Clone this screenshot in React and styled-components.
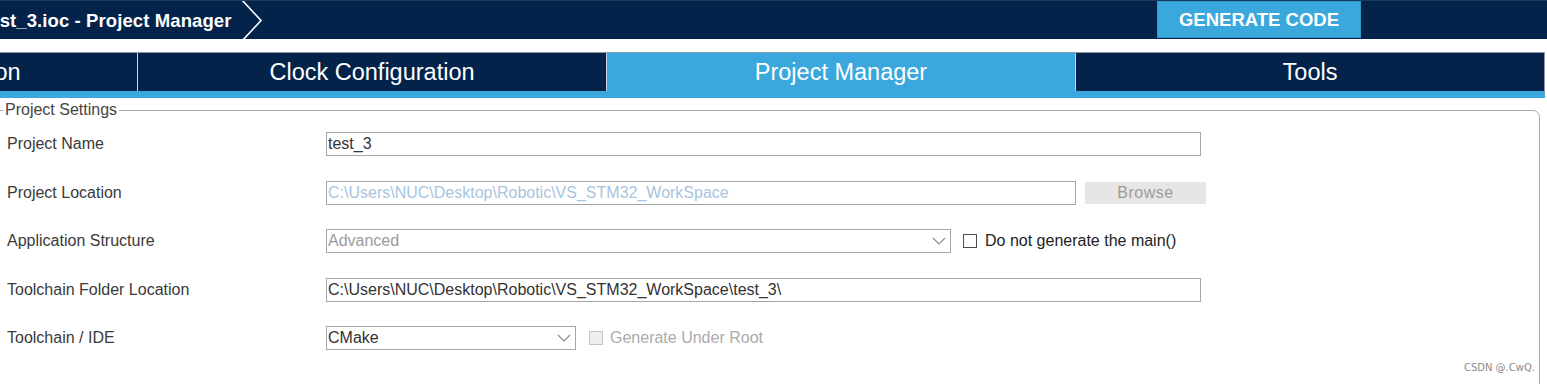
import React from "react";
import styled, { createGlobalStyle } from "styled-components";

const navy = "#03234b";
const blue = "#3aa8dc";

const GlobalStyle = createGlobalStyle`
  html, body {
    margin: 0;
    padding: 0;
    background: #ffffff;
    overflow: hidden;
  }
  body {
    font-family: "Liberation Sans", Arial, sans-serif;
  }
`;

const Page = styled.div`
  width: 1547px;
  height: 384px;
  overflow: hidden;
  position: relative;
`;

const TopBar = styled.div`
  display: flex;
  align-items: center;
  height: 39px;
  box-sizing: border-box;
  background: ${navy};
  border-top: 1px solid #1d3a60;
`;

const Title = styled.div`
  margin-left: -17px;
  color: #ffffff;
  font-weight: 700;
  font-size: 18.5px;
  letter-spacing: 0.1px;
  white-space: nowrap;
  padding-top: 1px;
`;

const Chevron = styled.svg`
  margin-left: 10px;
  flex: none;
`;

const GenerateButton = styled.div`
  margin-left: auto;
  margin-right: 186px;
  width: 204px;
  height: 37px;
  box-sizing: border-box;
  background: ${blue};
  border: 1px solid #3196c8;
  color: #ffffff;
  font-weight: 700;
  font-size: 18.5px;
  display: flex;
  align-items: center;
  justify-content: center;
  align-self: flex-start;
`;

const TabBar = styled.div`
  margin-top: 13px;
  margin-left: -331px;
  width: 1875px;
  border-top: 1px solid #8a98ac;
  border-right: 1px solid #8a98ac;
  border-bottom: 7px solid ${blue};
  display: flex;
`;

const Tab = styled.div`
  width: ${(p) => (p.$last ? 468 : 469)}px;
  height: 38px;
  flex: none;
  background: ${(p) => (p.$active ? blue : navy)};
  border-right: ${(p) => (p.$last ? "none" : "1px solid #c9d3de")};
  color: #ffffff;
  font-size: 23.5px;
  padding-top: 1px;
  box-sizing: border-box;
  display: flex;
  align-items: center;
  justify-content: center;
  white-space: nowrap;
`;

const Fieldset = styled.fieldset`
  margin: 3px 0 0 -6px;
  width: 1546px;
  height: 320px;
  box-sizing: border-box;
  border: 1px solid #a3a8ae;
  border-top-right-radius: 7px;
  padding: 13px 0 0 12px;
`;

const Legend = styled.legend`
  margin-left: -4px;
  padding: 0 2px;
  font-size: 16px;
  color: #444444;
  line-height: 18px;
`;

const Form = styled.div`
  display: flex;
  flex-direction: column;
  gap: 24.5px;
`;

const Row = styled.div`
  display: flex;
  align-items: center;
  height: 24px;
`;

const Label = styled.div`
  width: 319px;
  flex: none;
  font-size: 16px;
  color: #3a3a3a;
`;

const TextInput = styled.div`
  width: ${(p) => p.$width}px;
  height: 24px;
  box-sizing: border-box;
  border: 1px solid #a6a6a6;
  padding: 0 1px;
  font-size: 16px;
  line-height: 22px;
  color: ${(p) => (p.$disabled ? "#a9c4de" : "#333333")};
  white-space: nowrap;
  overflow: hidden;
`;

const BrowseButton = styled.div`
  margin-left: 9px;
  width: 121px;
  height: 22px;
  background: #e6e6e6;
  color: #9c9c9c;
  font-size: 16px;
  letter-spacing: 0.5px;
  display: flex;
  align-items: center;
  justify-content: center;
`;

const Select = styled.div`
  width: ${(p) => p.$width}px;
  height: 24px;
  box-sizing: border-box;
  border: 1px solid #a6a6a6;
  padding: 0 4px 0 1px;
  font-size: 16px;
  color: ${(p) => (p.$muted ? "#9b9b9b" : "#333333")};
  display: flex;
  align-items: center;
  justify-content: space-between;
`;

const CheckRow = styled.label`
  display: flex;
  align-items: center;
  margin-left: ${(p) => p.$offset}px;
  font-size: 16px;
  color: ${(p) => (p.$disabled ? "#ababab" : "#222222")};
`;

const Box = styled.span`
  width: 14px;
  height: 14px;
  box-sizing: border-box;
  border: 1px solid ${(p) => (p.$disabled ? "#c4c4c4" : "#4d4d4d")};
  background: ${(p) => (p.$disabled ? "#efefef" : "#ffffff")};
  margin-right: ${(p) => (p.$disabled ? 7 : 8)}px;
`;

const Watermark = styled.div`
  position: absolute;
  right: 12px;
  bottom: 11px;
  font-size: 10px;
  color: #8a8a8a;
  font-family: "DejaVu Sans", "Liberation Sans", sans-serif;
`;

const ArrowDown = () => (
  <svg width="14" height="8" viewBox="0 0 14 8">
    <path d="M1 1 L7 7 L13 1" fill="none" stroke="#8a8a8a" strokeWidth="1.1" />
  </svg>
);

const Check = ({ label, offset, disabled }) => (
  <CheckRow $offset={offset} $disabled={disabled}>
    <Box $disabled={disabled} />
    {label}
  </CheckRow>
);

export default function App() {
  return (
    <Page>
      <GlobalStyle />
      <TopBar>
        <Title>test_3.ioc - Project Manager</Title>
        <Chevron width="22" height="39" viewBox="0 0 22 39">
          <path d="M0 -1 L19 19.5 L0 40" fill="none" stroke="#ffffff" strokeWidth="1.6" />
        </Chevron>
        <GenerateButton>GENERATE CODE</GenerateButton>
      </TopBar>

      <TabBar>
        <Tab>Pinout &amp; Configuration</Tab>
        <Tab>Clock Configuration</Tab>
        <Tab $active>Project Manager</Tab>
        <Tab $last>Tools</Tab>
      </TabBar>

      <Fieldset>
        <Legend>Project Settings</Legend>
        <Form>
          <Row>
            <Label>Project Name</Label>
            <TextInput $width={875}>test_3</TextInput>
          </Row>
          <Row>
            <Label>Project Location</Label>
            <TextInput $width={750} $disabled>
              C:\Users\NUC\Desktop\Robotic\VS_STM32_WorkSpace
            </TextInput>
            <BrowseButton>Browse</BrowseButton>
          </Row>
          <Row>
            <Label>Application Structure</Label>
            <Select $width={625} $muted>
              Advanced
              <ArrowDown />
            </Select>
            <Check label="Do not generate the main()" offset={12} />
          </Row>
          <Row>
            <Label>Toolchain Folder Location</Label>
            <TextInput $width={875}>
              C:\Users\NUC\Desktop\Robotic\VS_STM32_WorkSpace\test_3\
            </TextInput>
          </Row>
          <Row>
            <Label>Toolchain / IDE</Label>
            <Select $width={250}>
              CMake
              <ArrowDown />
            </Select>
            <Check label="Generate Under Root" offset={13} disabled />
          </Row>
        </Form>
      </Fieldset>
      <Watermark>CSDN @.CwQ.</Watermark>
    </Page>
  );
}
